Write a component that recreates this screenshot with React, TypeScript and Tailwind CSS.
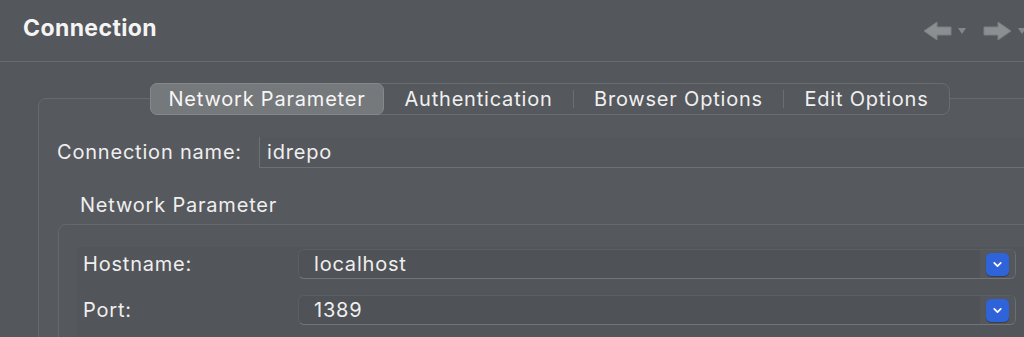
import { ChevronDown } from 'lucide-react';

const font = { fontFamily: 'Inter, "Liberation Sans", sans-serif' };

export default function App() {
  return (
    <div
      className="w-[1024px] h-[337px] overflow-hidden bg-[#54575b] text-[#efefef] tracking-[0.8px]"
      style={font}
    >
      {/* header */}
      <div className="h-[62px] flex items-center justify-between pl-[23px] pb-[5px] border-b border-[#696c6f]">
        <h1 className="text-[23px] font-bold text-[#f4f4f4] tracking-[0.4px] pt-[1px]">Connection</h1>
        <div className="flex items-center gap-[6px] pt-[6px] -mr-[2px]">
          <NavArrow dir="left" />
          <Caret />
          <div className="w-[5px]" />
          <NavArrow dir="right" />
          <Caret />
        </div>
      </div>

      <div className="pt-[21px]">
        <div className="relative z-10 ml-[150px] w-[800px] h-[32px] -mb-[17px] flex items-center rounded-[8px] border border-[#6a6d70] bg-[#55585c] text-[20px]">
          <Tab label="Network Parameter" width="w-[234px]" active />
          <Tab label="Authentication" width="w-[189px]" />
          <Sep />
          <Tab label="Browser Options" width="w-[209px]" />
          <Sep />
          <Tab label="Edit Options" width="flex-1" />
        </div>

        <div className="ml-[38px] w-[1040px] h-[300px] rounded-[8px] border border-[#67696c] bg-[#56595d] pt-[38px] pl-[18px]">
          <div className="flex items-center h-[30px]">
            <span className="w-[202px] text-[20px]">Connection name:</span>
            <div className="flex-1 h-[31px] flex items-center pl-[7px] border-l border-b border-[#6e7174] text-[20px] bg-[#54575b]">
              idrepo
            </div>
          </div>

          <div className="mt-[26px] h-[24px] pl-[23px] text-[20px] leading-[24px]">Network Parameter</div>

          <div className="mt-[7px] ml-[1px] rounded-[8px] border border-[#66696c] bg-[#55585c] pt-[22px] pl-[18px] h-[140px]">
            <div className="bg-[#525559] pt-[2px] pl-[6px] flex flex-col gap-[16px] h-[120px]">
              <ComboRow label="Hostname:" value="localhost" />
              <ComboRow label="Port:" value="1389" />
            </div>
          </div>
        </div>
      </div>
    </div>
  );
}

function Tab({ label, width, active }: { label: string; width: string; active?: boolean }) {
  return (
    <div
      className={
        'h-[32px] flex items-center justify-center ' +
        width +
        (active ? ' -ml-px rounded-[7px] bg-[#76797c] border border-[#86898c] text-[#f6f6f6]' : ' text-[#f0f0f0]')
      }
    >
      {label}
    </div>
  );
}

function Sep() {
  return <div className="w-px h-[18px] bg-[#6c6f72]" />;
}

function ComboRow({ label, value }: { label: string; value: string }) {
  return (
    <div className="flex items-center h-[30px]">
      <span className="w-[215px] text-[20px]">{label}</span>
      <div className="w-[718px] h-[30px] flex items-center rounded-[6px] border border-[#5b5e62] border-b-[#727578] border-r-[#6c6f72] bg-[#4f5256] pl-[15px] text-[20px]">
        <span className="flex-1">{value}</span>
        <div className="h-full w-[35px] flex items-center justify-center bg-[#54575b] rounded-r-[5px]">
          <div className="w-[23px] h-[23px] rounded-[5px] bg-[#2f63d9] flex items-center justify-center shadow-[0_1px_1px_rgba(0,0,0,0.3)]">
            <ChevronDown className="w-[13px] h-[13px] text-white" strokeWidth={3.2} />
          </div>
        </div>
      </div>
    </div>
  );
}

function NavArrow({ dir }: { dir: 'left' | 'right' }) {
  return (
    <svg width="29" height="20" viewBox="0 0 29 20" className={dir === 'right' ? '' : '-scale-x-100'}>
      <path d="M1 6 H15 V1 L28 10 L15 19 V14 H1 Z" fill="#8c8f92" stroke="#7c7f82" strokeWidth="1" strokeLinejoin="round" />
    </svg>
  );
}

function Caret() {
  return (
    <svg width="8" height="6" viewBox="0 0 8 6">
      <path d="M0 0 H8 L4 6 Z" fill="#85888b" />
    </svg>
  );
}
